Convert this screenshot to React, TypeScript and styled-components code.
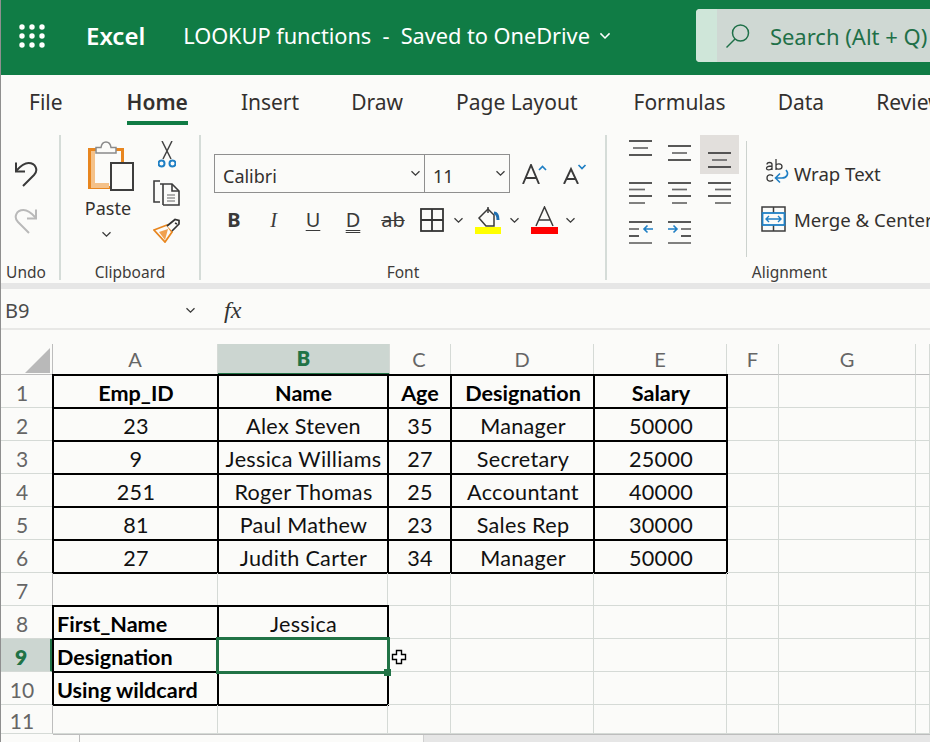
import React from 'react';
import styled, { createGlobalStyle } from 'styled-components';

const UI_FONT = `'Noto Sans', 'Open Sans', sans-serif`;
const SHEET_FONT = `Lato, 'Noto Sans', sans-serif`;
const GREEN = '#107c45';
const SHEET_GREEN = '#217346';

const GlobalStyle = createGlobalStyle`
  html, body { margin: 0; padding: 0; background: #fbfbf9; }
  body { font-family: ${UI_FONT}; overflow: hidden; }
`;

const Page = styled.div`
  width: 930px;
  height: 742px;
  box-sizing: border-box;
  border-left: 1px solid #8f8f8f;
  overflow: hidden;
  display: flex;
  flex-direction: column;
  background: #fbfbf9;
`;

/* title bar */
const TitleBar = styled.header`
  height: 75px;
  flex: none;
  box-sizing: border-box;
  background: ${GREEN};
  color: #fff;
  display: flex;
  align-items: center;
  padding: 0 0 4px 18px;
  & > * { flex: none; }
`;
const AppName = styled.span`
  font-size: 24px;
  font-weight: 600;
  margin-left: 41px;
`;
const DocName = styled.span`
  font-size: 21.8px;
  margin: 0 8px 0 38px;
  white-space: pre;
  letter-spacing: -0.05px;
`;
const SearchBox = styled.div`
  margin-left: 84px;
  width: 300px;
  height: 53px;
  border-radius: 4px;
  background: #cfd8d3;
  color: #1f7048;
  display: flex;
  align-items: center;
  overflow: hidden;
  font-size: 22px;
  white-space: nowrap;
`;
const SearchEdge = styled.div`
  width: 21px;
  height: 100%;
  flex: none;
  background: #cfe6d9;
  margin-right: 8px;
`;
const SearchText = styled.span`
  margin-left: 19px;
`;

/* tabs */
const TabRow = styled.nav`
  height: 52px;
  flex: none;
  display: flex;
  gap: 52px;
  padding-left: 28px;
  white-space: nowrap;
  font-size: 21px;
  color: #33302e;
`;
const Tab = styled.div<{ $active?: boolean; $after?: number }>`
  height: 50px;
  line-height: 54px;
  box-sizing: border-box;
  font-weight: ${(p) => (p.$active ? 600 : 400)};
  border-bottom: 4px solid ${(p) => (p.$active ? GREEN : 'transparent')};
  margin-right: ${(p) => p.$after ?? 0}px;
`;

/* ribbon */
const Ribbon = styled.section`
  height: 156px;
  flex: none;
  display: flex;
`;
const Group = styled.div<{ $w: number }>`
  width: ${(p) => p.$w}px;
  flex: none;
  height: 100%;
  display: flex;
  flex-direction: column;
`;
const GroupBody = styled.div`
  flex: 1;
  min-height: 0;
`;
const GroupLabel = styled.div`
  height: 21px;
  line-height: 20px;
  text-align: center;
  font-size: 15.5px;
  color: #3e3b3a;
`;
const GroupDivider = styled.div`
  width: 2px;
  flex: none;
  margin: 8px 0 3px;
  background: #d5dcd8;
`;
const UndoBody = styled(GroupBody)`
  display: flex;
  flex-direction: column;
  align-items: center;
  gap: 19px;
  padding-top: 33px;
`;
const ClipboardBody = styled(GroupBody)`
  display: flex;
  padding: 14px 0 0 19px;
`;
const PasteCol = styled.div`
  width: 56px;
  display: flex;
  flex-direction: column;
  align-items: center;
  font-size: 18px;
  color: #33302e;
  & > svg:first-child { margin-left: 6px; }
  & > svg:last-child { margin-right: 4px; }
`;
const PasteLabel = styled.span`
  line-height: 24px;
  margin: 5px 0 11px;
`;
const ClipTools = styled.div`
  margin-left: 17px;
  width: 27px;
  display: flex;
  flex-direction: column;
  align-items: center;
  gap: 12px;
`;
const FontBody = styled(GroupBody)`
  padding: 27px 0 0 13px;
`;
const FontRow = styled.div`
  display: flex;
  align-items: center;
`;
const FontBox = styled.div`
  width: 296px;
  height: 39px;
  box-sizing: border-box;
  border: 1px solid #8f8f8f;
  display: flex;
  font-size: 18px;
  color: #33302e;
`;
const FontField = styled.div<{ $w: number; $divider?: boolean }>`
  width: ${(p) => p.$w}px;
  box-sizing: border-box;
  padding: 0 3px 0 8px;
  display: flex;
  align-items: center;
  justify-content: space-between;
  border-right: ${(p) => (p.$divider ? '1px solid #8f8f8f' : 'none')};
  & > span { padding-top: 4px; }
`;
const SizeButtons = styled.div`
  display: flex;
  gap: 15px;
  margin-left: 12px;
`;
const StyleRow = styled(FontRow)`
  margin-top: 14px;
  height: 26px;
  color: #3a3a3a;
`;
const StyleSlot = styled.div<{ $w: number; $end?: number }>`
  width: ${(p) => p.$w}px;
  flex: none;
  box-sizing: border-box;
  padding-right: ${(p) => p.$end ?? 0}px;
  display: flex;
  align-items: center;
  justify-content: center;
`;
const StyleLetter = styled.span<{ $weight?: number; $italic?: boolean; $under?: boolean; $double?: boolean; $strike?: boolean }>`
  font-size: 20px;
  line-height: 24px;
  font-family: ${(p) => (p.$italic ? `'Liberation Serif', serif` : UI_FONT)};
  font-weight: ${(p) => p.$weight ?? 400};
  font-style: ${(p) => (p.$italic ? 'italic' : 'normal')};
  text-decoration: ${(p) => (p.$strike ? 'line-through' : p.$under ? 'underline' : 'none')};
  text-decoration-style: ${(p) => (p.$double ? 'double' : 'solid')};
  text-decoration-thickness: 1px;
  text-underline-offset: 3px;
`;
const AlignmentBody = styled(GroupBody)`
  display: flex;
  padding: 8px 0 0 15px;
`;
const AlignGrid = styled.div`
  display: grid;
  grid-template-columns: repeat(3, 39px);
  grid-auto-rows: 39px;
`;
const AlignCell = styled.div<{ $active?: boolean }>`
  background: ${(p) => (p.$active ? '#e2dfdc' : 'transparent')};
`;
const InnerDivider = styled.div`
  width: 1px;
  height: 116px;
  margin: 6px 14px 0 7px;
  background: #ccd2ce;
`;
const WrapList = styled.div`
  padding-top: 23px;
  display: flex;
  flex-direction: column;
  gap: 16px;
  font-size: 18.6px;
  color: #33302e;
  white-space: nowrap;
`;
const WrapItem = styled.div`
  height: 30px;
  display: flex;
  align-items: center;
  gap: 8px;
`;

/* formula bar */
const Band = styled.div`
  height: 6px;
  flex: none;
  background: #e6e6e6;
`;
const FormulaBar = styled.div`
  height: 41px;
  flex: none;
  box-sizing: border-box;
  border-bottom: 2px solid #e8e8e6;
  display: flex;
  align-items: center;
  padding: 3px 0 0 4px;
  color: #4a4a4a;
`;
const NameBox = styled.div`
  width: 180px;
  font-size: 20px;
`;
const Fx = styled.span`
  margin-left: 28px;
  font-family: 'Liberation Serif', serif;
  font-style: italic;
  font-size: 24px;
  color: #333;
`;

/* sheet */
const Sheet = styled.div`
  margin-top: 14px;
  flex: none;
  display: grid;
  grid-template-columns: 52px 165px 170px 63px 143px 133px 52px 137px 1fr;
  grid-template-rows: 31px repeat(10, 33px) 29px;
  font-family: ${SHEET_FONT};
`;
const ColHead = styled.div<{ $selected?: boolean }>`
  display: flex;
  align-items: center;
  justify-content: center;
  font-size: 20px;
  padding-bottom: 1px;
  box-sizing: border-box;
  color: ${(p) => (p.$selected ? SHEET_GREEN : '#666')};
  font-weight: ${(p) => (p.$selected ? 800 : 400)};
  background: ${(p) => (p.$selected ? '#ccd6d1' : 'transparent')};
  border-right: 1px solid #d5dad6;
  border-bottom: ${(p) => (p.$selected ? `3px solid ${SHEET_GREEN}` : '1px solid #bdbdbd')};
  ${(p) => (p.$selected ? 'margin: 0 -2px -1px 0;' : '')}
`;
const Corner = styled.div`
  box-sizing: border-box;
  border-right: 1px solid #bdbdbd;
  border-bottom: 1px solid #bdbdbd;
  display: flex;
  align-items: center;
  padding: 2px 0 0 24px;
`;
const RowHead = styled.div<{ $selected?: boolean }>`
  position: relative;
  display: flex;
  align-items: center;
  justify-content: center;
  padding: 3px 9px 0 0;
  box-sizing: border-box;
  font-size: 21px;
  color: ${(p) => (p.$selected ? SHEET_GREEN : '#666')};
  font-weight: ${(p) => (p.$selected ? 800 : 400)};
  background: ${(p) => (p.$selected ? '#ccd6d1' : 'transparent')};
  border-right: ${(p) => (p.$selected ? `3px solid ${SHEET_GREEN}` : '1px solid #bdbdbd')};
  border-bottom: 1px solid #d5dad6;
`;
const Cell = styled.div<{ $boxed?: boolean; $bold?: boolean; $left?: boolean; $selected?: boolean }>`
  position: relative;
  box-sizing: border-box;
  display: flex;
  align-items: center;
  justify-content: ${(p) => (p.$left ? 'flex-start' : 'center')};
  padding: 3px 0 0 ${(p) => (p.$left ? '4px' : '2px')};
  font-size: 21.6px;
  letter-spacing: ${(p) => (p.$bold ? '0' : '0.3px')};
  font-weight: ${(p) => (p.$bold ? 700 : 400)};
  color: ${(p) => (p.$bold ? '#000' : '#111')};
  white-space: nowrap;
  border-right: 1px solid #d5dad6;
  border-bottom: 1px solid #d5dad6;
  ${(p) => (p.$boxed ? 'outline: 2px solid #000; outline-offset: -1px;' : '')}
  ${(p) => (p.$selected ? `outline: 3px solid ${SHEET_GREEN}; outline-offset: -1px; z-index: 2;` : '')}
`;
const FillHandle = styled.div`
  position: absolute;
  right: -4px;
  bottom: -5px;
  width: 7px;
  height: 7px;
  background: ${SHEET_GREEN};
`;
const CursorMark = styled.svg`
  position: absolute;
  left: calc(100% + 4px);
  top: 10px;
`;

/* bottom scroll strip */
const ScrollStrip = styled.div`
  height: 8px;
  flex: none;
  display: flex;
  margin-left: 52px;
  border-top: 1px solid #bdbdbd;
`;
const ScrollTab = styled.div`
  width: 26px;
  border-right: 1px solid #bdbdbd;
`;
const ScrollThumb = styled.div`
  width: 343px;
  border-right: 1px solid #d0d0d0;
`;
const ScrollTrack = styled.div`
  flex: 1;
  background: #e6e6e6;
`;

const Chevron = ({ color = '#3a3a3a', wide }: { color?: string; wide?: boolean }) => (
  <svg width={wide ? 14 : 11} height={wide ? 8 : 7} viewBox="0 0 11 7" fill="none">
    <path d="M1.5 1.2 5.5 5.2 9.5 1.2" stroke={color} strokeWidth="1.3" />
  </svg>
);

const WaffleIcon = () => (
  <svg width="26" height="24" viewBox="0 0 26 24" fill="#fff">
    {[3, 12, 21].map((y) =>
      [3, 13, 23].map((x) => <circle key={`${x}-${y}`} cx={x} cy={y} r="2.7" />),
    )}
  </svg>
);

const SearchIcon = () => (
  <svg width="26" height="26" viewBox="0 0 26 26" fill="none" stroke="#1f7048" strokeWidth="1.5">
    <circle cx="15.5" cy="10" r="8" />
    <path d="M10 16 1.5 24.5" />
  </svg>
);

const UndoIcon = ({ color, flip }: { color: string; flip?: boolean }) => (
  <svg width="24" height="28" viewBox="0 0 24 28" fill="none" stroke={color} strokeWidth="2" style={flip ? { transform: 'scaleX(-1)' } : undefined}>
    <path d="M9 26 20 15C24.500 10.500 22 3 14.500 3 10.500 3 7 5.500 2.500 10.500" />
    <path d="M2 2.500V11.500H11" />
  </svg>
);

const PasteIcon = () => (
  <svg width="46" height="50" viewBox="0 0 46 50" fill="none">
    <rect x="1.500" y="8.500" width="33" height="38" fill="#fbfbf9" stroke="#e8861f" strokeWidth="3" />
    <path d="M3 42H21V47H3Z" fill="#f4c189" />
    <path d="M3 10H7V42H3Z" fill="#f4c189" />
    <path d="M8 12V6.500H13C13.500 3 15 1 18 1 21 1 22.500 3 23 6.500H28V12Z" fill="#fbfbf9" stroke="#8a8a8a" strokeWidth="1.500" />
    <rect x="23" y="22" width="22" height="27" fill="#fbfbf9" stroke="#3d3d3d" strokeWidth="2" />
  </svg>
);

const ScissorsIcon = () => (
  <svg width="18" height="27" viewBox="0 0 18 27" fill="none">
    <path d="M4 0 13 18M14 0 5 18" stroke="#444" strokeWidth="1.500" />
    <circle cx="3.500" cy="22.500" r="3" stroke="#1f7fc4" strokeWidth="2" />
    <circle cx="14.500" cy="22.500" r="3" stroke="#1f7fc4" strokeWidth="2" />
  </svg>
);

const CopyIcon = () => (
  <svg width="27" height="26" viewBox="0 0 27 26" fill="none" stroke="#3d3d3d" strokeWidth="1.600">
    <path d="M7 1H1V22H7" />
    <path d="M7 4H19L26 11V25H10" />
    <path d="M10 4V25M19 4V11H26" />
    <path d="M14 15H22M14 18H22M14 21H22" strokeWidth="1.200" stroke="#666" />
  </svg>
);

const PainterIcon = () => (
  <svg width="27" height="25" viewBox="0 0 27 25" fill="none">
    <path d="M1 12 14 7 19 14 12 24Z" fill="#fbfbf9" stroke="#e8861f" strokeWidth="1.800" />
    <path d="M6 14 15 11 12 22Z" fill="#f0a04f" />
    <path d="M14 8 22 1.500 26 2.500 26 6 19 13" fill="#fbfbf9" stroke="#333" strokeWidth="1.700" />
    <path d="M22 5 24 6" stroke="#333" strokeWidth="1.400" />
  </svg>
);

const GrowFontIcon = () => (
  <svg width="26" height="20" viewBox="0 0 26 20" fill="none">
    <path d="M1 20 9 1 17 20M4 14H14" stroke="#3a3a3a" strokeWidth="1.900" />
    <path d="M17 6 20.500 2.500 24 6" stroke="#1f7fc4" strokeWidth="1.700" />
  </svg>
);

const ShrinkFontIcon = () => (
  <svg width="24" height="20" viewBox="0 0 24 20" fill="none">
    <path d="M1 20 8 5 15 20M3.500 15H12.500" stroke="#3a3a3a" strokeWidth="1.900" />
    <path d="M15.500 1 19 4.500 22.500 1" stroke="#1f7fc4" strokeWidth="1.700" />
  </svg>
);

const BordersIcon = () => (
  <svg width="24" height="24" viewBox="0 0 24 24" fill="none" stroke="#333" strokeWidth="1.800">
    <rect x="1" y="1" width="22" height="22" />
    <path d="M12 1V23M1 12H23" />
  </svg>
);

const FillIcon = () => (
  <svg width="27" height="28" viewBox="0 0 27 28" fill="none">
    <path d="M4 12 13 3 19 9V20H11Z" fill="#fbfbf9" stroke="#3a3a3a" strokeWidth="1.500" />
    <path d="M13 1V7" stroke="#3a3a3a" strokeWidth="1.500" />
    <path d="M19 7C22 7 23 10 23 14" stroke="#1f6fb0" strokeWidth="3" />
    <rect x="0" y="21" width="26" height="7" fill="#ffff00" />
  </svg>
);

const FontColorIcon = () => (
  <svg width="27" height="28" viewBox="0 0 27 28" fill="none">
    <path d="M5 20 13.500 1 22 20M8 14H19" stroke="#3a3a3a" strokeWidth="1.500" />
    <rect x="0" y="21" width="27" height="7" fill="#ff0000" />
  </svg>
);

// y positions of each line, with [left, right] for the line within the 39px cell
type AlignLine = [number, number, number];
const AlignIcon = ({ lines, arrow }: { lines: AlignLine[]; arrow?: 'left' | 'right' }) => (
  <svg width="39" height="39" viewBox="0 0 39 39" fill="none">
    {lines.map(([y, a, b], i) => (
      <path key={i} d={`M${a} ${y}H${b}`} stroke={i % 2 ? '#6a6a6a' : '#3a3a3a'} strokeWidth="1.700" />
    ))}
    {arrow === 'left' && <path d="M31 16H22M25.500 12.500 22 16 25.500 19.500" stroke="#1f7fc4" strokeWidth="1.600" />}
    {arrow === 'right' && <path d="M7 16H16M12.500 12.500 16 16 12.500 19.500" stroke="#1f7fc4" strokeWidth="1.600" />}
  </svg>
);

const alignIcons: { lines: AlignLine[]; arrow?: 'left' | 'right'; active?: boolean }[] = [
  { lines: [[6, 7, 30], [13, 11, 26], [20, 7, 30]] },
  { lines: [[11, 7, 30], [18, 11, 26], [25, 7, 30]] },
  { lines: [[18, 8, 31], [25, 12, 27], [32, 8, 31]], active: true },
  { lines: [[9, 7, 30], [15.500, 7, 23], [22, 7, 30], [29, 7, 23]] },
  { lines: [[9, 7, 30], [15.500, 11, 26], [22, 7, 30], [29, 11, 26]] },
  { lines: [[9, 8, 31], [15.500, 15, 31], [22, 8, 31], [29, 15, 31]] },
  { lines: [[9, 7, 30], [16, 7, 17], [23, 7, 17], [30, 7, 30]], arrow: 'left' },
  { lines: [[9, 7, 30], [16, 20, 30], [23, 20, 30], [30, 7, 30]], arrow: 'right' },
];

const WrapIcon = () => (
  <svg width="25" height="26" viewBox="0 0 25 26" fill="none" style={{ margin: '-3px -4px 0 4px' }}>
    <path d="M2 5.500C2 4 3 3.500 4.500 3.500 6 3.500 7 4 7 5.500V11M7 7C3 7 1.500 7.800 1.500 9.300 1.500 11.500 5.500 11.500 7 9" stroke="#3a3a3a" strokeWidth="1.300" />
    <path d="M11 0V11M11 7C11 4 17 4 17 7.500 17 11 11 11 11 8" stroke="#3a3a3a" strokeWidth="1.300" />
    <path d="M8 17C6.500 15.500 2 15 2 19 2 23 6.500 22.500 8 21" stroke="#3a3a3a" strokeWidth="1.300" />
    <path d="M21 11C24.500 15 21.500 19 17 19H11M15 14.500 10.500 19 15 23.500" stroke="#1f7fc4" strokeWidth="1.600" />
  </svg>
);

const MergeIcon = () => (
  <svg width="25" height="26" viewBox="0 0 25 26" fill="none">
    <path d="M1 1H24V25H1ZM12.500 1V7M12.500 19V25" stroke="#3d3d3d" strokeWidth="1.500" />
    <rect x="1.500" y="7" width="22" height="12" fill="#fbfbf9" stroke="#1f7fc4" strokeWidth="1.800" />
    <path d="M5 13H20M8 10 5 13 8 16M17 10 20 13 17 16" stroke="#1f7fc4" strokeWidth="1.400" />
  </svg>
);

const columns = ['A', 'B', 'C', 'D', 'E', 'F', 'G', ''];

const tableRows = [
  ['Emp_ID', 'Name', 'Age', 'Designation', 'Salary'],
  ['23', 'Alex Steven', '35', 'Manager', '50000'],
  ['9', 'Jessica Williams', '27', 'Secretary', '25000'],
  ['251', 'Roger Thomas', '25', 'Accountant', '40000'],
  ['81', 'Paul Mathew', '23', 'Sales Rep', '30000'],
  ['27', 'Judith Carter', '34', 'Manager', '50000'],
];

const lookupRows = [
  ['First_Name', 'Jessica'],
  ['Designation', ''],
  ['Using wildcard', ''],
];

const renderRow = (rowNumber: number) => {
  const data = rowNumber <= 6 ? tableRows[rowNumber - 1] : rowNumber >= 8 && rowNumber <= 10 ? lookupRows[rowNumber - 8] : [];
  const selectedRow = rowNumber === 9;
  return (
    <React.Fragment key={rowNumber}>
      <RowHead $selected={selectedRow}>{rowNumber}</RowHead>
      {columns.map((_, col) => {
        const boxed = col < data.length;
        const isSelected = selectedRow && col === 1;
        return (
          <Cell
            key={col}
            $boxed={boxed}
            $bold={rowNumber === 1 || (rowNumber >= 8 && col === 0)}
            $left={rowNumber >= 8 && col === 0}
            $selected={isSelected}
          >
            {data[col]}
            {isSelected && (
              <>
                <FillHandle />
                <CursorMark width="16" height="16" viewBox="0 0 16 16">
                  <path d="M5.500 1.500H10.500V5.500H14.500V10.500H10.500V14.500H5.500V10.500H1.500V5.500H5.500Z" fill="#fff" stroke="#000" strokeWidth="1.400" />
                </CursorMark>
              </>
            )}
          </Cell>
        );
      })}
    </React.Fragment>
  );
};

const App = () => {
  return (
    <Page>
      <GlobalStyle />
      <TitleBar>
        <WaffleIcon />
        <AppName>Excel</AppName>
        <DocName>LOOKUP functions  -  Saved to OneDrive</DocName>
        <Chevron color="#fff" wide />
        <SearchBox>
          <SearchEdge />
          <SearchIcon />
          <SearchText>Search (Alt + Q)</SearchText>
        </SearchBox>
      </TitleBar>

      <TabRow>
        <Tab $after={12}>File</Tab>
        <Tab $active $after={1}>Home</Tab>
        <Tab>Insert</Tab>
        <Tab $after={1}>Draw</Tab>
        <Tab $after={4}>Page Layout</Tab>
        <Tab>Formulas</Tab>
        <Tab>Data</Tab>
        <Tab>Review</Tab>
      </TabRow>

      <Ribbon>
        <Group $w={50}>
          <UndoBody>
            <UndoIcon color="#3a3a3a" />
            <UndoIcon color="#b9b9b9" flip />
          </UndoBody>
          <GroupLabel>Undo</GroupLabel>
        </Group>
        <Group $w={8} />
        <GroupDivider />
        <Group $w={138}>
          <ClipboardBody>
            <PasteCol>
              <PasteIcon />
              <PasteLabel>Paste</PasteLabel>
              <Chevron />
            </PasteCol>
            <ClipTools>
              <ScissorsIcon />
              <CopyIcon />
              <PainterIcon />
            </ClipTools>
          </ClipboardBody>
          <GroupLabel>Clipboard</GroupLabel>
        </Group>
        <GroupDivider />
        <Group $w={404}>
          <FontBody>
            <FontRow>
              <FontBox>
                <FontField $w={210} $divider>
                  <span>Calibri</span> <Chevron />
                </FontField>
                <FontField $w={84}>
                  <span>11</span> <Chevron />
                </FontField>
              </FontBox>
              <SizeButtons>
                <GrowFontIcon />
                <ShrinkFontIcon />
              </SizeButtons>
            </FontRow>
            <StyleRow>
              <StyleSlot $w={40}>
                <StyleLetter $weight={700}>B</StyleLetter>
              </StyleSlot>
              <StyleSlot $w={39}>
                <StyleLetter $italic>I</StyleLetter>
              </StyleSlot>
              <StyleSlot $w={40}>
                <StyleLetter $under>U</StyleLetter>
              </StyleSlot>
              <StyleSlot $w={40}>
                <StyleLetter $under $double>D</StyleLetter>
              </StyleSlot>
              <StyleSlot $w={47} $end={7}>
                <StyleLetter $strike>ab</StyleLetter>
              </StyleSlot>
              <BordersIcon />
              <StyleSlot $w={31} $end={2}>
                <Chevron />
              </StyleSlot>
              <FillIcon />
              <StyleSlot $w={29} $end={4}>
                <Chevron />
              </StyleSlot>
              <FontColorIcon />
              <StyleSlot $w={24}>
                <Chevron />
              </StyleSlot>
            </StyleRow>
          </FontBody>
          <GroupLabel>Font</GroupLabel>
        </Group>
        <GroupDivider />
        <Group $w={365}>
          <AlignmentBody>
            <AlignGrid>
              {alignIcons.map((icon, i) => (
                <AlignCell key={i} $active={icon.active}>
                  <AlignIcon lines={icon.lines} arrow={icon.arrow} />
                </AlignCell>
              ))}
            </AlignGrid>
            <InnerDivider />
            <WrapList>
              <WrapItem>
                <WrapIcon /> Wrap Text
              </WrapItem>
              <WrapItem>
                <MergeIcon /> Merge &amp; Center
              </WrapItem>
            </WrapList>
          </AlignmentBody>
          <GroupLabel>Alignment</GroupLabel>
        </Group>
      </Ribbon>

      <Band />
      <FormulaBar>
        <NameBox>B9</NameBox>
        <Chevron />
        <Fx>fx</Fx>
      </FormulaBar>

      <Sheet>
        <Corner>
          <svg width="25" height="25" viewBox="0 0 25 25">
            <path d="M25 0V25H0Z" fill="#b9b9b9" />
          </svg>
        </Corner>
        {columns.map((col, i) => (
          <ColHead key={i} $selected={col === 'B'}>
            {col}
          </ColHead>
        ))}
        {Array.from({ length: 11 }, (_, i) => renderRow(i + 1))}
      </Sheet>

      <ScrollStrip>
        <ScrollTab />
        <ScrollThumb />
        <ScrollTrack />
      </ScrollStrip>
    </Page>
  );
};

export default App;
